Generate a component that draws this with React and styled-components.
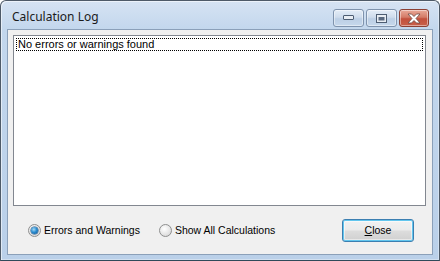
import styled, { createGlobalStyle } from 'styled-components';

const GlobalStyle = createGlobalStyle`
  html, body {
    margin: 0;
    padding: 0;
    background: #ffffff;
  }
  * {
    box-sizing: border-box;
  }
`;

const Window = styled.div`
  width: 440px;
  height: 261px;
  display: flex;
  flex-direction: column;
  border: 1px solid #4e5a68;
  border-bottom-color: #2f4a5a;
  border-radius: 6px 6px 0 0;
  background: linear-gradient(180deg, #d6e3f3 0px, #c3d7ed 28px, #bad0e9 100%);
  box-shadow: inset 1px 1px 0 rgba(255, 255, 255, 0.55), inset -1px -1px 0 rgba(255, 255, 255, 0.35);
  font-family: "Liberation Sans", Arial, sans-serif;
`;

const TitleBar = styled.div`
  height: 28px;
  display: flex;
  justify-content: space-between;
  align-items: flex-start;
  padding: 0 10px 0 11px;
`;

const Title = styled.div`
  font-family: "Noto Sans", "Open Sans", sans-serif;
  font-size: 12px;
  color: #1a1a1a;
  line-height: 16px;
  margin-top: 8px;
`;

const CaptionButtons = styled.div`
  display: flex;
  gap: 2px;
  margin-top: 8px;
`;

const CaptionButton = styled.div`
  width: ${p => (p.$wide ? 30 : 31)}px;
  height: 18px;
  border-radius: 3px;
  display: flex;
  align-items: center;
  justify-content: center;
  border: 1px solid ${p => (p.$danger ? '#8b4034' : '#7f93ad')};
  background: ${p =>
    p.$danger
      ? 'linear-gradient(180deg, #e9a998 0%, #d47b67 45%, #c2503c 55%, #c8604a 100%)'
      : 'linear-gradient(180deg, #e4edf7 0%, #cfdcec 45%, #bccfe5 55%, #c6d8ec 100%)'};
  box-shadow: inset 0 0 0 1px rgba(255, 255, 255, 0.45);
`;

const Client = styled.div`
  flex: 1;
  margin: 0 6px 5px 6px;
  border: 1px solid #8ba0b9;
  background: #f0f0f0;
  display: flex;
  flex-direction: column;
  padding: 5px 6px 0 5px;
`;

const ListBox = styled.div`
  height: 171px;
  background: #ffffff;
  border: 1px solid #828790;
  padding: 2px;
`;

const ListItem = styled.div`
  height: 13px;
  border: 1px dotted #000000;
  font-size: 11px;
  line-height: 11px;
  color: #000000;
  padding-left: 1px;
  white-space: nowrap;
`;

const Footer = styled.div`
  flex: 1;
  display: flex;
  align-items: center;
  padding: 0 12px 0 15px;
`;

const RadioGroup = styled.div`
  display: flex;
  align-items: center;
  gap: 19px;
  flex: 1;
`;

const RadioOption = styled.label`
  display: flex;
  align-items: center;
  gap: 3px;
  font-size: 10.5px;
  color: #000000;
`;

const RadioCircle = styled.span`
  width: 13px;
  height: 13px;
  border-radius: 50%;
  border: 1px solid #8e8f8f;
  background: radial-gradient(circle at 40% 35%, #ffffff 0%, #e6e6e6 55%, #cfcfcf 100%);
  display: flex;
  align-items: center;
  justify-content: center;
`;

const RadioDot = styled.span`
  width: 7px;
  height: 7px;
  border-radius: 50%;
  background: radial-gradient(circle at 40% 35%, #a8dbf6 0%, #2b8dd0 45%, #0b4f8e 100%);
  box-shadow: 0 0 0 0.5px #1b4f80;
`;

const PushButton = styled.button`
  width: 72px;
  height: 23px;
  border: 1px solid #3c7fb1;
  border-radius: 3px;
  background: linear-gradient(180deg, #f2f2f2 0%, #ebebeb 48%, #dddddd 52%, #cfcfcf 100%);
  box-shadow: inset 0 0 0 1px #62c6ee, inset 0 0 0 2px rgba(255, 255, 255, 0.5);
  font-family: "Liberation Sans", Arial, sans-serif;
  font-size: 10.5px;
  color: #000000;
  padding: 0;
  cursor: default;

  u {
    text-decoration: underline;
  }
`;

const MinIcon = () => (
  <svg width="11" height="6" viewBox="0 0 11 6">
    <rect x="0.5" y="0.5" width="10" height="4" rx="0.5" fill="#e8edf3" stroke="#4d5d72" />
  </svg>
);

const MaxIcon = () => (
  <svg width="11" height="9" viewBox="0 0 11 9">
    <rect x="0.5" y="0.5" width="10" height="8" fill="#e8edf3" stroke="#4d5d72" />
    <rect x="2.5" y="3" width="6" height="3.5" fill="#5a6a80" />
  </svg>
);

const CloseIcon = () => (
  <svg width="14" height="11" viewBox="0 0 14 11">
    <path
      d="M1 1 H4.5 L7 3.5 L9.5 1 H13 L9 5.5 L13 10 H9.5 L7 7.5 L4.5 10 H1 L5 5.5 Z"
      fill="#ffffff"
      stroke="#6b4a44"
      strokeWidth="0.8"
      strokeLinejoin="round"
    />
  </svg>
);

const App = () => (
  <>
    <GlobalStyle />
    <Window>
      <TitleBar>
        <Title>Calculation Log</Title>
        <CaptionButtons>
          <CaptionButton><MinIcon /></CaptionButton>
          <CaptionButton><MaxIcon /></CaptionButton>
          <CaptionButton $wide $danger><CloseIcon /></CaptionButton>
        </CaptionButtons>
      </TitleBar>
      <Client>
        <ListBox>
          <ListItem>No errors or warnings found</ListItem>
        </ListBox>
        <Footer>
          <RadioGroup>
            <RadioOption>
              <RadioCircle><RadioDot /></RadioCircle>
              Errors and Warnings
            </RadioOption>
            <RadioOption>
              <RadioCircle />
              Show All Calculations
            </RadioOption>
          </RadioGroup>
          <PushButton><u>C</u>lose</PushButton>
        </Footer>
      </Client>
    </Window>
  </>
);

export default App;
